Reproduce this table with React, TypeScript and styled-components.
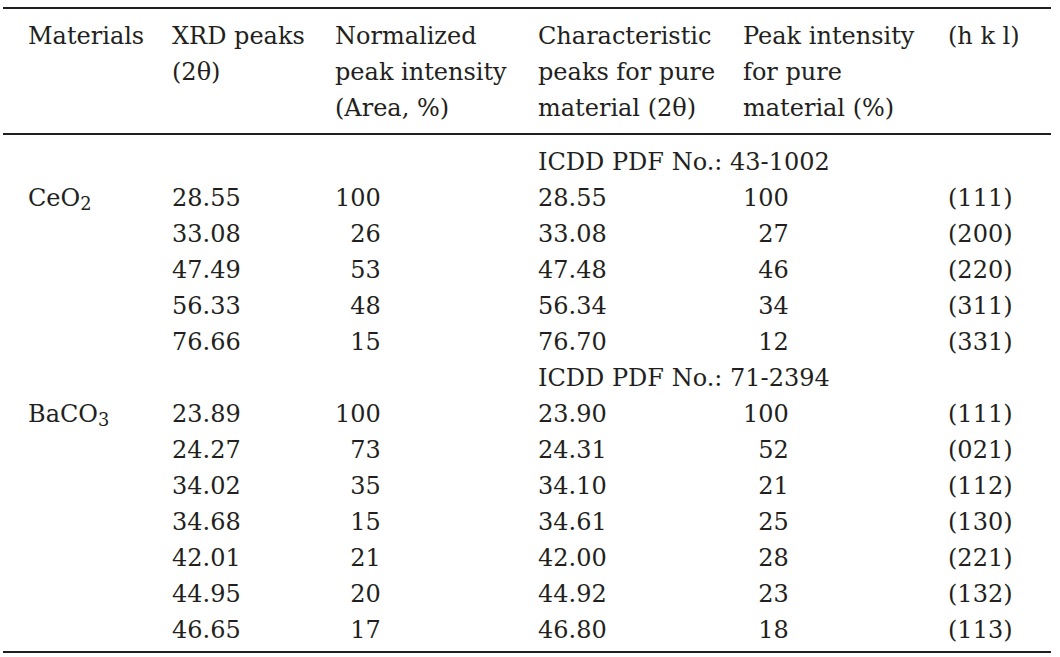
import React from 'react';
import styled, { createGlobalStyle } from 'styled-components';

const GlobalStyle = createGlobalStyle`
  html, body {
    margin: 0;
    padding: 0;
    background: #ffffff;
  }
`;

const Page = styled.div`
  padding: 7px 9px 4px 3px;
  font-family: 'DejaVu Serif', 'Liberation Serif', serif;
  font-size: 24px;
  color: #231f20;
`;

const Table = styled.table`
  width: 1048px;
  border-collapse: collapse;
  table-layout: fixed;
  border-top: 2px solid #231f20;
  border-bottom: 2px solid #231f20;
`;

const Head = styled.thead`
  border-bottom: 2px solid #231f20;
`;

const HeadCell = styled.th`
  font-weight: normal;
  text-align: left;
  vertical-align: top;
  line-height: 36px;
  padding: 9px 0 7px;
  white-space: nowrap;

  &:first-child {
    padding-left: 25px;
  }
`;

const Row = styled.tr<{ $first?: boolean; $last?: boolean }>`
  & > td {
    padding-top: ${({ $first }) => ($first ? '9px' : '0')};
    padding-bottom: ${({ $last }) => ($last ? '3px' : '0')};
  }
`;

const Cell = styled.td`
  line-height: 36px;
  padding: 0;
  vertical-align: baseline;
  white-space: nowrap;

  &:first-child {
    padding-left: 25px;
  }
`;

const Num = styled.span`
  display: inline-block;
  width: 3ch;
  text-align: right;
`;

const Sub = styled.sub`
  font-size: 0.74em;
  line-height: 0;
  vertical-align: baseline;
  position: relative;
  top: 0.22em;
`;

type Peak = [string, string, string, string, string];

interface Group {
  material: React.ReactNode;
  card: string;
  peaks: Peak[];
}

const groups: Group[] = [
  {
    material: (
      <>
        CeO<Sub>2</Sub>
      </>
    ),
    card: 'ICDD PDF No.: 43-1002',
    peaks: [
      ['28.55', '100', '28.55', '100', '(111)'],
      ['33.08', '26', '33.08', '27', '(200)'],
      ['47.49', '53', '47.48', '46', '(220)'],
      ['56.33', '48', '56.34', '34', '(311)'],
      ['76.66', '15', '76.70', '12', '(331)'],
    ],
  },
  {
    material: (
      <>
        BaCO<Sub>3</Sub>
      </>
    ),
    card: 'ICDD PDF No.: 71-2394',
    peaks: [
      ['23.89', '100', '23.90', '100', '(111)'],
      ['24.27', '73', '24.31', '52', '(021)'],
      ['34.02', '35', '34.10', '21', '(112)'],
      ['34.68', '15', '34.61', '25', '(130)'],
      ['42.01', '21', '42.00', '28', '(221)'],
      ['44.95', '20', '44.92', '23', '(132)'],
      ['46.65', '17', '46.80', '18', '(113)'],
    ],
  },
];

const App: React.FC = () => {
  return (
    <Page>
      <GlobalStyle />
      <Table>
        <colgroup>
          <col style={{ width: 169 }} />
          <col style={{ width: 163 }} />
          <col style={{ width: 203 }} />
          <col style={{ width: 205 }} />
          <col style={{ width: 205 }} />
          <col style={{ width: 103 }} />
        </colgroup>
        <Head>
          <tr>
            <HeadCell>Materials</HeadCell>
            <HeadCell>
              XRD peaks
              <br />
              (2θ)
            </HeadCell>
            <HeadCell>
              Normalized
              <br />
              peak intensity
              <br />
              (Area, %)
            </HeadCell>
            <HeadCell>
              Characteristic
              <br />
              peaks for pure
              <br />
              material (2θ)
            </HeadCell>
            <HeadCell>
              Peak intensity
              <br />
              for pure
              <br />
              material (%)
            </HeadCell>
            <HeadCell>(h k l)</HeadCell>
          </tr>
        </Head>
        <tbody>
          {groups.map((group, gi) => (
            <React.Fragment key={gi}>
              <Row $first={gi === 0}>
                <Cell />
                <Cell />
                <Cell />
                <Cell colSpan={3}>{group.card}</Cell>
              </Row>
              {group.peaks.map((peak, pi) => (
                <Row
                  key={pi}
                  $last={gi === groups.length - 1 && pi === group.peaks.length - 1}
                >
                  <Cell>{pi === 0 ? group.material : null}</Cell>
                  <Cell>{peak[0]}</Cell>
                  <Cell>
                    <Num>{peak[1]}</Num>
                  </Cell>
                  <Cell>{peak[2]}</Cell>
                  <Cell>
                    <Num>{peak[3]}</Num>
                  </Cell>
                  <Cell>{peak[4]}</Cell>
                </Row>
              ))}
            </React.Fragment>
          ))}
        </tbody>
      </Table>
    </Page>
  );
};

export default App;
